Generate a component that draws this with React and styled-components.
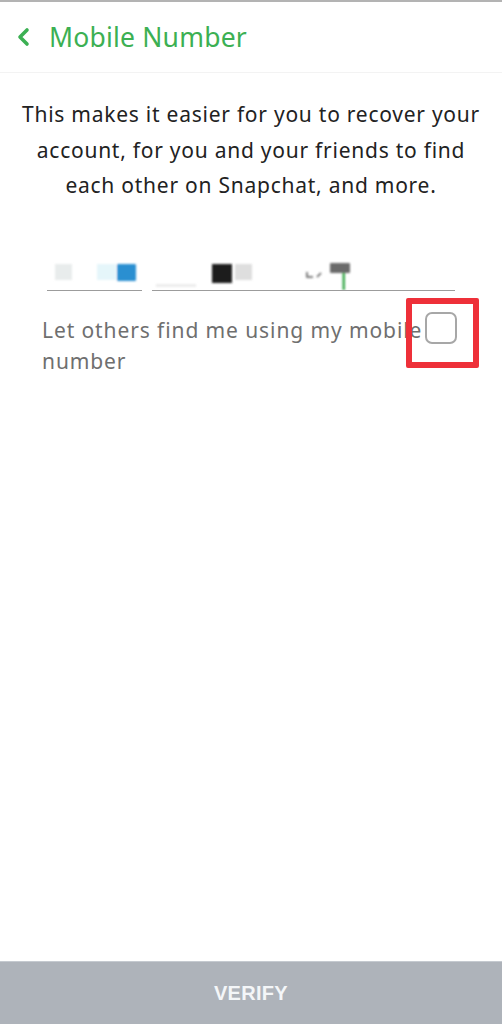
import styled, { createGlobalStyle } from 'styled-components'

const Global = createGlobalStyle`
  html, body {
    margin: 0;
    padding: 0;
    background: #fff;
  }
  #root {
    height: 1024px;
  }
`

const Screen = styled.div`
  width: 502px;
  height: 1024px;
  display: flex;
  flex-direction: column;
  background: #fff;
  font-family: "Noto Sans", "Liberation Sans", sans-serif;
  box-sizing: border-box;
  border-top: 2px solid #b3b3b3;
`

const Header = styled.div`
  height: 70px;
  display: flex;
  align-items: center;
  padding-left: 16px;
  gap: 19px;
  border-bottom: 1px solid #f3f3f3;
`

const Title = styled.h1`
  margin: 0;
  font-size: 26.5px;
  font-weight: 400;
  letter-spacing: 0.2px;
  color: #3cb053;
`

const Body = styled.div`
  flex: 1;
  display: flex;
  flex-direction: column;
`

const Intro = styled.p`
  margin: 24px 0 0;
  padding: 0 12px;
  text-align: center;
  font-size: 21px;
  line-height: 35.5px;
  letter-spacing: 0.75px;
  color: #222;
`

const PhoneRow = styled.div`
  margin: 50px 0 0 47px;
  width: 408px;
  display: flex;
  gap: 10px;
`

const Field = styled.div`
  height: 36px;
  flex: ${p => p.$grow};
  border-bottom: 1px solid #9c9c9c;

  & > svg {
    display: block;
  }
`

const OptionRow = styled.div`
  position: relative;
  margin: 24px 0 0 42px;
  width: 440px;
`

const Label = styled.p`
  margin: 0;
  font-size: 21px;
  line-height: 31px;
  letter-spacing: 0.9px;
  color: #6f6f6f;
`

const Check = styled.span`
  position: absolute;
  top: -3px;
  left: 383px;
  width: 32px;
  height: 32px;
  box-sizing: border-box;
  border: 2px solid #a7a7a7;
  border-radius: 7px;
  background: #fff;
`

const Highlight = styled.span`
  position: absolute;
  top: -17px;
  left: 364px;
  width: 73px;
  height: 70px;
  box-sizing: border-box;
  border: 6px solid #ee3039;
  border-radius: 2px;
`

const VerifyBar = styled.button`
  height: 63px;
  border: none;
  border-top: 1px solid #c5cad0;
  background: #aeb3ba;
  color: #f4f6f8;
  font-family: "Liberation Sans", Arial, sans-serif;
  font-weight: 700;
  font-size: 20px;
  letter-spacing: 0.3px;
`

const Chevron = () => (
  <svg width="14" height="20" viewBox="0 0 14 20">
    <path d="M11 3 L4 10 L11 17" fill="none" stroke="#3cb053" strokeWidth="3.6" strokeLinecap="round" strokeLinejoin="round" />
  </svg>
)

// blurred phone number pieces, drawn as a picture
const CodeBlur = () => (
  <svg width="95" height="36" viewBox="0 0 95 36">
    <defs>
      <filter id="soft1"><feGaussianBlur stdDeviation="0.8" /></filter>
    </defs>
    <g filter="url(#soft1)">
      <rect x="8" y="10" width="17" height="16" fill="#e8ecec" />
      <rect x="50" y="10" width="19" height="16" fill="#e5f6fa" />
      <rect x="70" y="10" width="19" height="17" rx="1" fill="#2b8fd1" />
    </g>
  </svg>
)

const NumberBlur = () => (
  <svg width="303" height="36" viewBox="0 0 303 36">
    <defs>
      <filter id="soft2"><feGaussianBlur stdDeviation="0.8" /></filter>
    </defs>
    <g filter="url(#soft2)">
      <rect x="4" y="30" width="40" height="3" fill="#ececec" />
      <rect x="60" y="10" width="20" height="19" fill="#1b1b1b" />
      <rect x="83" y="10" width="17" height="16" fill="#dedede" />
      <path d="M155 18 V23 H161 M165 23 L169 19" fill="none" stroke="#555" strokeWidth="1.5" />
      <rect x="178" y="9" width="20" height="10" rx="1" fill="#6a6a6a" />
      <rect x="190.5" y="19" width="2.5" height="17" fill="#37a84a" />
    </g>
  </svg>
)

export default function App() {
  return (
    <>
      <Global />
      <Screen>
        <Header>
          <Chevron />
          <Title>Mobile Number</Title>
        </Header>
        <Body>
          <Intro>
            This makes it easier for you to recover your account, for you and your friends to find each other on Snapchat, and more.
          </Intro>
          <PhoneRow>
            <Field $grow="0 0 95px">
              <CodeBlur />
            </Field>
            <Field $grow="1">
              <NumberBlur />
            </Field>
          </PhoneRow>
          <OptionRow>
            <Label>
              Let others find me using my mobile
              <br />
              number
            </Label>
            <Check />
            <Highlight />
          </OptionRow>
        </Body>
        <VerifyBar>VERIFY</VerifyBar>
      </Screen>
    </>
  )
}
